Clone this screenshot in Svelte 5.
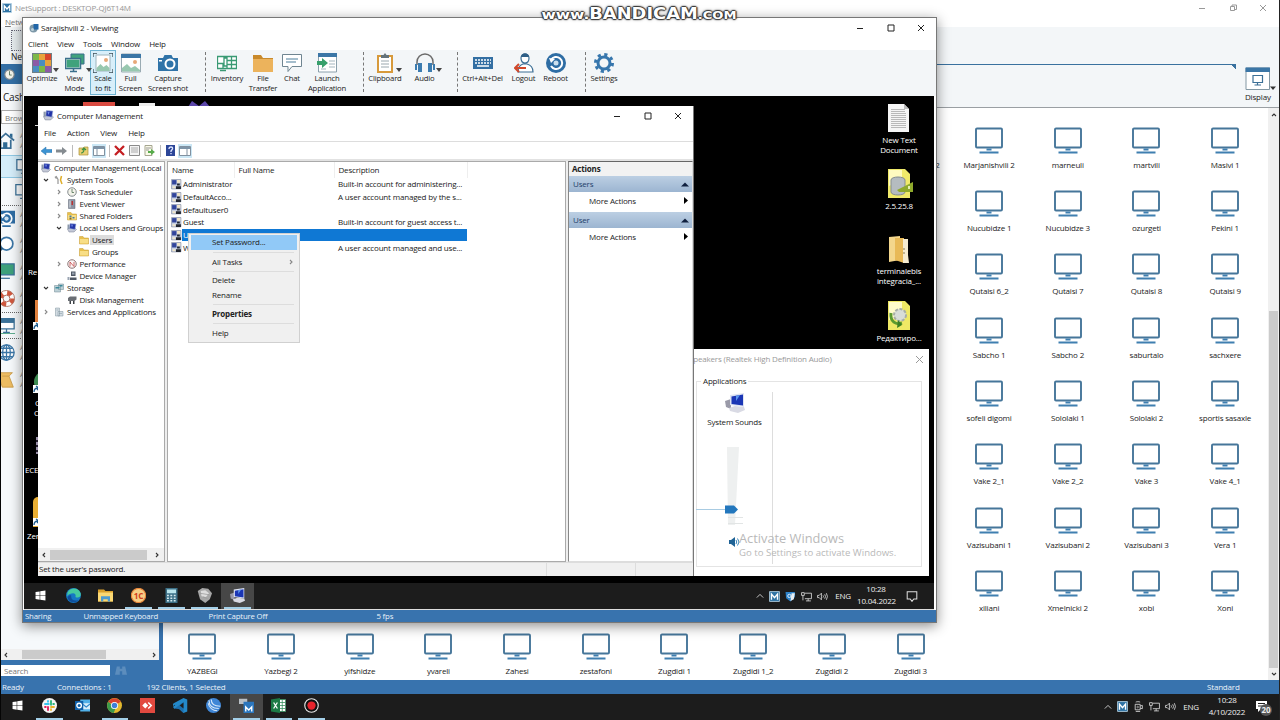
<script lang="ts">
  const clientRows = [
    ['2', 'Marjanishvili 2', 'marneuli', 'martvili', 'Masivi 1'],
    ['Nucubidze 1', 'Nucubidze 3', 'ozurgeti', 'Pekini 1'],
    ['Qutaisi 6_2', 'Qutaisi 7', 'Qutaisi 8', 'Qutaisi 9'],
    ['Sabcho 1', 'Sabcho 2', 'saburtalo', 'sachxere'],
    ['sofeli digomi', 'Sololaki 1', 'Sololaki 2', 'sportis sasaxle'],
    ['Vake 2_1', 'Vake 2_2', 'Vake 3', 'Vake 4_1'],
    ['Vazisubani 1', 'Vazisubani 2', 'Vazisubani 3', 'Vera 1'],
    ['xiliani', 'Xmelnicki 2', 'xobi', 'Xoni'],
    ['YAZBEGI', 'Yazbegi 2', 'yifshidze', 'yvareli', 'Zahesi', 'zestafoni', 'Zugdidi 1', 'Zugdidi 1_2', 'Zugdidi 2', 'Zugdidi 3'],
  ];

  const tools = [
    { icon: 'optimize', label: 'Optimize', w: 34, drop: true },
    { icon: 'viewmode', label: 'View\nMode', w: 31, drop: true },
    { icon: 'scale', label: 'Scale\nto fit', w: 26, active: true },
    { icon: 'full', label: 'Full\nScreen', w: 29 },
    { icon: 'camera', label: 'Capture\nScreen shot', w: 46 },
    { sep: true, w: 15 },
    { icon: 'inventory', label: 'Inventory', w: 42 },
    { icon: 'folder', label: 'File\nTransfer', w: 30 },
    { icon: 'chat', label: 'Chat', w: 28 },
    { icon: 'launch', label: 'Launch\nApplication', w: 42 },
    { sep: true, w: 16 },
    { icon: 'clipboard', label: 'Clipboard', w: 42, drop: true },
    { icon: 'audio', label: 'Audio', w: 37, drop: true },
    { sep: true, w: 15 },
    { icon: 'keyboard', label: 'Ctrl+Alt+Del', w: 49 },
    { icon: 'logout', label: 'Logout', w: 33 },
    { icon: 'reboot', label: 'Reboot', w: 31 },
    { sep: true, w: 15 },
    { icon: 'settings', label: 'Settings', w: 36 },
  ];

  const tree = [
    { label: 'Computer Management (Local', icon: 'mgmt', depth: 0, arrow: '' },
    { label: 'System Tools', icon: 'tools', depth: 1, arrow: 'open' },
    { label: 'Task Scheduler', icon: 'clock', depth: 2, arrow: 'closed' },
    { label: 'Event Viewer', icon: 'event', depth: 2, arrow: 'closed' },
    { label: 'Shared Folders', icon: 'shared', depth: 2, arrow: 'closed' },
    { label: 'Local Users and Groups', icon: 'mgmt', depth: 2, arrow: 'open' },
    { label: 'Users', icon: 'yfolder', depth: 3, arrow: '', selected: true },
    { label: 'Groups', icon: 'yfolder', depth: 3, arrow: '' },
    { label: 'Performance', icon: 'perf', depth: 2, arrow: 'closed' },
    { label: 'Device Manager', icon: 'device', depth: 2, arrow: '' },
    { label: 'Storage', icon: 'storage', depth: 1, arrow: 'open' },
    { label: 'Disk Management', icon: 'disk', depth: 2, arrow: '' },
    { label: 'Services and Applications', icon: 'services', depth: 1, arrow: 'closed' },
  ];

  const users = [
    { name: 'Administrator', desc: 'Built-in account for administering...' },
    { name: 'DefaultAcco...', desc: 'A user account managed by the s...' },
    { name: 'defaultuser0', desc: '' },
    { name: 'Guest', desc: 'Built-in account for guest access t...' },
    { name: 'U', desc: '', selected: true },
    { name: 'W', desc: 'A user account managed and use...' },
  ];

  const sideIcons = [
    { icon: 'house', h: 30 },
    { icon: 'screen', h: 23, active: true },
    { icon: 'screen', h: 28, dotted: true },
    { icon: 'sreboot', h: 25 },
    { icon: 'search', h: 27 },
    { icon: 'green', h: 27 },
    { icon: 'ring', h: 28, dotted: true },
    { icon: 'net', h: 26, dotted: true },
    { icon: 'globe', h: 26 },
    { icon: 'map', h: 28 },
  ];

  const remoteTasks = ['win', 'edge', 'explorer', 'onec', 'calc', 'shell', 'mmc'];
  const localTasks = ['win', 'slack', 'outlook', 'chrome', 'anydesk', 'vscode', 'swirl', 'netsupport', 'excel', 'record'];
</script>

{#snippet icon(name: string, size: number)}
  <svg class="icon" width={size} height={size} viewBox="0 0 20 20" fill="none">
    {#if name === 'optimize'}
      <path fill="#6f7f85" d="M0 0h20v20H0z" />
      <path fill="#8c5aa5" d="M1 7h6v6H1zM13 13h6v6h-6z" />
      <path fill="#7bb84a" d="M1 1h6v6H1zM7 13h6v6H7z" />
      <path fill="#d9452c" d="M13 1h6v6h-6z" />
      <path fill="#4a8ec0" d="M7 7h6v6H7zM1 13h6v6H1z" />
      <path fill="#e8a33c" d="M7 1h6v6H7zM13 7h6v6h-6z" />
    {:else if name === 'viewmode'}
      <path fill="#3fa27c" stroke="#3a6f8c" d="M6 1h13v10H6z" />
      <path fill="#3fa27c" stroke="#fff" d="M1 6h14v9H1z" />
      <path stroke="#3a6f8c" d="M.5 5.500h15v10H.5zM5 18.500h7M8.500 15v3" stroke-width="1.500" />
    {:else if name === 'scale'}
      <path fill="#fff" stroke="#9eb4bd" d="M3 2h14v16H3z" />
      <path fill="#98c8b0" d="M3.500 15l4-4 3 3 3-2 3 3v3h-13z" />
      <circle cx="13" cy="7" r="2" fill="#e8a878" />
      <path stroke="#3d4d56" stroke-width="1.300" d="M0 4V0h4M16 0h4v4M20 16v4h-4M4 20H0v-4" />
    {:else if name === 'full'}
      <path fill="#fff" stroke="#9aabb3" d="M.5 1h19v18H.5z" />
      <path fill="#3b76a6" d="M0 1h20v4H0z" />
      <path fill="#98c8b0" d="M1 15l5-4 4 4 4-2 5 4v1.500H1z" />
      <circle cx="14" cy="9" r="2" fill="#e8a878" />
    {:else if name === 'camera'}
      <path fill="#2f73a8" d="M0 5h5l1.500-3h7L15 5h5v13H0z" />
      <circle cx="12" cy="11" r="4.500" stroke="#fff" stroke-width="2" />
      <path fill="#fff" d="M1 7h3v1.500H1z" />
    {:else if name === 'inventory'}
      <path stroke="#3a9a74" stroke-width="1.300" fill="#fff" d="M.5 3.500h19v12H.5zM10 3.500v12M14.500 3.500v12M10 7.500h9M10 11.500h9M1 10.500h5v5M7 5h3v8H7z" />
      <path stroke="#3a9a74" stroke-width="1.500" d="M3 17.500h6" />
    {:else if name === 'folder'}
      <path fill="#c98a2c" d="M0 2h8l2 3h10v3H0z" />
      <path fill="#ecb35c" d="M0 6h20v13H0z" />
    {:else if name === 'chat'}
      <path fill="#fff" stroke="#6f8591" d="M.5 1.500h19v12H10l-4 5v-5H.5z" />
      <path stroke="#88a9bd" stroke-width="1.500" d="M4 6h12M4 9h10" />
    {:else if name === 'launch'}
      <path fill="#fff" stroke="#8aa0ac" d="M1.500 1h18v18h-18z" />
      <path fill="#3b76a6" d="M1 0h19v4H1z" />
      <path fill="#37a06c" d="M0 8h5V5l6 5-6 5v-3H0z" />
      <path stroke="#a3b5be" d="M12 8h6M12 11h6M4 16h5M12 14h6" />
    {:else if name === 'clipboard'}
      <path fill="#fff" stroke="#d79a3c" stroke-width="2" d="M3 3h14v16H3z" />
      <path fill="#64737b" d="M6 2h2.500l1.500-2 1.500 2H14v3H6z" />
      <path stroke="#9aa7ae" d="M6 8h8M6 11h8M6 14h8" />
    {:else if name === 'audio'}
      <path stroke="#6b6b6b" stroke-width="1.500" d="M2 12V9a8 8 0 0 1 16 0v3" />
      <path fill="#3c7cb0" d="M0 11h2v6H0zM3 10h4v9H3zM13 10h4v9h-4zM18 11h2v6h-2z" />
    {:else if name === 'keyboard'}
      <path fill="#336fa3" d="M0 4h20v12H0z" />
      <path stroke="#fff" stroke-width="1.500" stroke-dasharray="2 1" d="M2 7h16M2 10h16" />
      <path stroke="#fff" stroke-width="1.500" d="M4 13h12" />
    {:else if name === 'logout'}
      <path stroke="#3c6f96" stroke-width="1.200" fill="#fff" d="M7 5a4 4 0 0 1 8 0c0 3-1.500 5-4 5S7 8 7 5zM4 19c0-5 2-7 5-8h4c4 1 6 3 6 8z" />
      <path fill="#2f5f86" d="M7 4c0-5 8-5 8 0z" />
      <path stroke="#d0492c" stroke-width="2" d="M1 15h11M5 11l-4 4 4 4" />
    {:else if name === 'reboot' || name === 'sreboot'}
      {#if name === 'reboot'}<circle cx="10" cy="10" r="10" fill="#2e6da4" />{:else}<path fill="#2e6da4" d="M0 1h20v15H0zM5 18h10v2H5z" />{/if}
      <path stroke="#fff" stroke-width="2" d="M5 7a6 6 0 1 1 0 6" />
      <path fill="#fff" d="M3 5l6 1-4 4z" />
      <circle cx="10" cy="10" r="2.500" fill="#cde0ee" />
    {:else if name === 'settings'}
      <circle cx="10" cy="10" r="6" stroke="#3676ad" stroke-width="3" />
      <circle cx="10" cy="10" r="8.500" stroke="#3676ad" stroke-width="3" stroke-dasharray="3.200 3.475" />
    {:else if name === 'screen' || name === 'net'}
      <path stroke="#3b7299" stroke-width="1.500" fill="#fdfeff" d="M1 2h18v12H1zM6 18h8M10 14v4" />
      {#if name === 'net'}<path fill="#3b7299" d="M1 2h18v5H1z" /><path stroke="#3a9a74" d="M0 19.500h20" />{/if}
    {:else if name === 'green'}
      <path fill="#3da07a" stroke="#3b7299" stroke-width="1.500" d="M-4 1h23v13H-4z" /><path stroke="#3b7299" stroke-width="1.500" d="M2 18h12" />
    {:else if name === 'house'}
      <path fill="#f7fafb" stroke="#3b6f96" stroke-width="2" d="M0 10L9 2l10 8M3 9v10h12V9" /><path fill="#2f6a94" d="M6 12h5v7H6zM14 2h3v5l-3-2z" />
    {:else if name === 'search'}
      <circle cx="10" cy="9" r="7.500" stroke="#3b76a6" stroke-width="2" fill="#fff" /><path stroke="#2b5a80" stroke-width="3" d="M5 14l-5 5" />
    {:else if name === 'ring'}
      <circle cx="10" cy="10" r="7" stroke="#fff" stroke-width="5" /><circle cx="10" cy="10" r="7" stroke="#d0583e" stroke-width="5" stroke-dasharray="5.500 5.500" /><circle cx="10" cy="10" r="4" stroke="#a8503e" /><circle cx="10" cy="10" r="9.500" stroke="#b0705e" />
    {:else if name === 'globe'}
      <circle cx="10" cy="10" r="9" stroke="#3b76a6" stroke-width="1.500" fill="#fff" /><path stroke="#3b76a6" stroke-width="1.500" d="M10 1v18M1 10h18M3 5h14M3 15h14" /><ellipse cx="10" cy="10" rx="4.500" ry="9" stroke="#3b76a6" stroke-width="1.500" />
    {:else if name === 'map'}
      <path fill="#ecbc62" stroke="#c99a45" d="M0 2h17l-4 4 5 13H5L2 9H0zM5 6h8" />
    {:else if name === 'mgmt'}
      <path fill="#c3c8d6" stroke="#777f92" d="M1 12l5-3h9l4 4-5 5H4z" />
      <path fill="#2334a6" stroke="#a9b7db" d="M6 1l12 1-2 11-11-2z" />
      <path fill="#6f89e6" d="M8 3l4 .5L10 9z" />
      <path fill="#8b98aa" d="M1 3h4v9H1z" />
    {:else if name === 'mmc'}
      <path fill="#9a9aa8" d="M0 8l6-2v10l-5-2z" />
      <path fill="#d9dae4" d="M4 15l6-2 9 1 1 3-7 3-8-2z" />
      <path fill="#dfe4f2" d="M5 2l14-2v14L5 12z" />
      <path fill="#1b36b5" d="M6.500 3.500L18 1.500v11L6.500 11z" />
      <path fill="#5d96ee" d="M11 2.700l4-.7-4 6z" />
    {:else if name === 'tools'}
      <path stroke="#9a9a9a" stroke-width="2.500" d="M4 2l4 7v9M2 3l3 4" /><path stroke="#dfae2a" stroke-width="3" d="M15 2l-2 8 3 8" />
    {:else if name === 'clock'}
      <circle cx="10" cy="10" r="8.500" fill="#f3f3ea" stroke="#858b8e" stroke-width="2" /><path stroke="#4a6b4c" stroke-width="1.500" d="M10 4v7h4" />
    {:else if name === 'event'}
      <path fill="#8c94a3" stroke="#5a6270" d="M3 1h13v18H3z" /><path fill="#b33" d="M9 4h3v8H9z" /><path fill="#dce2e8" d="M5 3h2v14H5z" />
    {:else if name === 'shared' || name === 'yfolder'}
      <path fill="#e8c04c" stroke="#c69b31" d="M1 3h7l2 3h9v12H1z" /><path fill="#f8de86" d="M2 8h16v9H2z" />
      {#if name === 'shared'}<path fill="#4c7f9e" d="M5 9h4v3H5zM11 12h4v3h-4z" /><path fill="#7f6a25" d="M5 13h4v4H5z" />{/if}
    {:else if name === 'perf'}
      <circle cx="10" cy="10" r="8.500" fill="#fbf5f5" stroke="#8c7575" stroke-width="2" /><path stroke="#c03c3c" stroke-width="1.500" d="M6 15V6l8 9V6" />
    {:else if name === 'device'}
      <path fill="#525a66" d="M8 1h9v9H8zM6 13h13v5H6z" /><path fill="#9aa4b2" d="M10 3h5v4h-5zM1 12h4v6H1z" />
    {:else if name === 'storage'}
      <path fill="#bcd0d6" stroke="#6c8790" d="M1 5h12v13H1zM9 2h10v11H9z" /><path fill="#3c8a9c" d="M3 8h8v3H3zM11 4h6v3h-6z" />
    {:else if name === 'disk'}
      <path fill="#6a6e74" d="M2 6l4-3h13v6l-4 3H2z" /><path fill="#3c4045" d="M5 12h3v6H5zM12 12h3v6h-3z" />
    {:else if name === 'services'}
      <path fill="#d4dde3" stroke="#7e929d" d="M3 2h8v16H3zM8 9h10v9H8z" /><path stroke="#7e929d" d="M5 6h4M10 13h6" />
    {:else if name === 'user'}
      <path fill="#c9d2e4" stroke="#687390" d="M1 1h17v17H1z" />
      <path fill="#31459b" d="M2 2h8v8H2z" /><path fill="#21262f" d="M11 8h5v4h-5zM9 13h9v5H9z" /><path fill="#f1e6c8" d="M11 2h6v5h-6zM3 13h5v4H3z" />
    {:else if name === 'win'}
      <path fill="#fff" d="M1 3.500l7.500-1v7H1zM9.500 2.300L19 1v8.500H9.500zM1 10.500h7.500v7L1 16.500zM9.500 10.500H19V19l-9.500-1.300z" />
    {:else if name === 'edge'}
      <circle cx="10" cy="10" r="10" fill="#1677c4" /><path fill="#45c9a0" d="M2 6C5-1 17-2 19.500 7c1 5-3 7-7 5 1-2 0-5-3-5-3 0-6 1-8 4z" /><path fill="#0f4f9c" d="M7 10c-1 6 4 8 10 6-4 5-13 4-15-3 1-3 3-4 5-3z" />
    {:else if name === 'explorer'}
      <path fill="#d9a02c" d="M0 2h8l2 2h10v14H0z" /><path fill="#fbd873" d="M0 6h20v12H0z" /><path fill="#4e9bd0" d="M4 11h12v7h-3v-3H7v3H4z" />
    {:else if name === 'onec'}
      <circle cx="10" cy="10" r="9.500" fill="#f7cf86" stroke="#e8863a" stroke-width="1.500" />
      <text x="10" y="14" text-anchor="middle" font-size="11" font-weight="bold" fill="#d2401c">1C</text>
    {:else if name === 'calc'}
      <path fill="#3b6f86" d="M2 0h16v20H2z" /><path fill="#b9e4ec" d="M4 2h12v5H4z" /><path stroke="#d5e9ee" stroke-width="2" stroke-dasharray="2.500 2" d="M4 10h13M4 13.500h13M4 17h13" />
    {:else if name === 'shell'}
      <path fill="#a7a7a7" d="M1 4l6-4 8 1 5 6-3 8-6 5-7-5z" /><path fill="#dedede" d="M5 4l6-1 5 4-4 5-6-1z" /><path stroke="#999" d="M4 7l12 2M8 12l6 2" />
    {:else if name === 'slack'}
      <circle cx="10" cy="10" r="10" fill="#f5f5f5" /><path stroke="#36c5f0" stroke-width="2.500" stroke-linecap="round" d="M4 8h5M8 4v1" /><path stroke="#2eb67d" stroke-width="2.500" stroke-linecap="round" d="M12 4v5M15 8h1" /><path stroke="#e01e5a" stroke-width="2.500" stroke-linecap="round" d="M8 12v4M4 12h1" /><path stroke="#ecb22e" stroke-width="2.500" stroke-linecap="round" d="M12 12h4M12 15v1" />
    {:else if name === 'outlook'}
      <path fill="#50b0e8" d="M7 2h13v16H7z" /><path fill="#d8eefa" d="M9 7h11v8H9z" /><path stroke="#2f87c9" stroke-width="1.500" d="M10 8l5 4 5-4" /><path fill="#0f5fa8" d="M0 4h11v12H0z" /><circle cx="5.500" cy="10" r="3" stroke="#fff" stroke-width="1.800" />
    {:else if name === 'chrome'}
      <circle cx="10" cy="10" r="10" fill="#e3b92e" /><path fill="#d8422f" d="M1.500 5A10 10 0 0 1 18.500 5L10 10z" /><path fill="#3c9a4c" d="M1.500 5A10 10 0 0 0 9 20l3-8-4-2z" /><circle cx="10" cy="10" r="4.800" fill="#fff" /><circle cx="10" cy="10" r="3.700" fill="#3f7fd8" />
    {:else if name === 'anydesk'}
      <path fill="#e2493f" d="M0 0h20v20H0z" /><path fill="#fff" d="M3 10l4-4 4 4-4 4z" /><path stroke="#fff" stroke-width="2" d="M11 6l4 4-4 4" />
    {:else if name === 'vscode'}
      <path fill="#2489ca" d="M14 0l5 2v16l-5 2L2 9l-2 2V8l1-1z" /><path fill="#1c6fae" d="M14 0v20L9 15l-7-1-2-1 14-8z" /><path stroke="#2489ca" stroke-width="3" d="M1 13L14 3" /><path fill="#1e1e1e" d="M14 6v8l-5-4z" />
    {:else if name === 'swirl'}
      <circle cx="10" cy="10" r="10" fill="#3f86d6" /><path stroke="#d5e7fa" stroke-width="1.500" d="M4 3c0 7 5 11 13 11M7 2c0 6 4 9 12 9M3 7c1 6 6 10 12 10" />
    {:else if name === 'netsupport'}
      <path fill="#b9bfc4" d="M0 1h11v7H0z" /><path fill="#2b76bd" d="M6 5h14v15H6z" /><path stroke="#fff" stroke-width="1.800" d="M9 18v-6l4 4 4-4v6" />
    {:else if name === 'excel'}
      <path fill="#fff" stroke="#2f8b58" d="M10 2h9.500v16H10z" /><path stroke="#2f8b58" d="M10 6h9M10 10h9M10 14h9M15 2v16" /><path fill="#1c7a45" d="M0 2l12-2v20L0 18z" /><path stroke="#fff" stroke-width="1.700" d="M3.500 6l5 8M8.500 6l-5 8" />
    {:else if name === 'record'}
      <circle cx="10" cy="10" r="9" fill="#111" stroke="#e8e8e8" stroke-width="1.500" /><circle cx="10" cy="10" r="5.500" fill="#e8242c" />
    {:else if name === 'm'}
      <path fill="#2f73a4" stroke="#b7d4e6" stroke-width="1.500" d="M1 1h18v18H1z" /><path stroke="#fff" stroke-width="2.500" d="M4.500 16V5.500L10 12l5.500-6.500V16" />
    {:else if name === 'dual'}
      <circle cx="9" cy="11" r="8" fill="#7d98a8" /><path fill="#2166a8" d="M9 2h10v11H9z" /><circle cx="7" cy="13" r="3" fill="#bcd0da" />
    {:else if name === 'shield'}
      <path fill="#2d82c9" d="M1 2h17v9l-8 8-8-6z" /><path fill="#e9eef1" d="M12 4h6l-2 11-6 3z" /><circle cx="8" cy="9" r="3" stroke="#fff" stroke-width="1.500" />
    {:else if name === 'up'}
      <path stroke="#eee" stroke-width="2" d="M2 14l8-8 8 8" />
    {:else if name === 'meet'}
      <path stroke="#ddd" stroke-width="1.500" d="M4 6h9v10H4zM13 9l4-1v6l-4-1M5 2c2-1 6-1 8 0M5 19h8" /><circle cx="8.500" cy="11" r="1.500" stroke="#ddd" />
    {:else if name === 'lan'}
      <path stroke="#ddd" stroke-width="1.500" d="M7 4h12v10H7M13 14v4M9 18h9M1 3h5v5H1zM3.500 8v9" />
    {:else if name === 'sound'}
      <path stroke="#ddd" stroke-width="1.500" d="M1 8h3l4-4v12l-4-4H1zM11 8q1.500 2 0 4M14 6q3 4 0 8M17 4q4 6 0 12" />
    {:else if name === 'note'}
      <path stroke="#ddd" stroke-width="1.700" d="M2 3h16v12h-5l-3 4-3-4H2z" />
    {:else if name === 'binoc'}
      <path fill="#5c8dbd" d="M3 4h5v4h4V4h5l3 14h-8v-6H8v6H0z" />
    {/if}
  </svg>
{/snippet}

{#snippet controls(restore: boolean)}
  <div class="controls">
    <svg width="10" height="10" viewBox="0 0 10 10"><path d="M2 5.500h6" /></svg>
    <svg width="10" height="10" viewBox="0 0 10 10">
      {#if restore}<path d="M2.500 3.500h4v4h-4zM4 3.500V2h4.500v4.500H7" />{:else}<path d="M2 2h6v6H2z" />{/if}
    </svg>
    <svg width="10" height="10" viewBox="0 0 10 10"><path d="M2 2l6 6M8 2L2 8" /></svg>
  </div>
{/snippet}

{#snippet chevron(dir: string)}
  <svg class="chev {dir}" width="6" height="6" viewBox="0 0 6 6"><path d="M2 1l2 2-2 2" /></svg>
{/snippet}

<div class="screen">
  <header class="main-title">
    <div class="title-left">
      {@render icon('m', 10)}
      <span>NetSupport : DESKTOP-QJ6T14M</span>
    </div>
    {@render controls(true)}
  </header>
  <div class="main-menu"><u>N</u>etwork</div>

  <div class="main-toolbar">
    <div class="new-tool">
      <span class="notepad"></span>
      <span>New</span>
    </div>
    <div class="ribbon-line"></div>
    <div class="display-tool">
      <svg width="31" height="24" viewBox="0 0 31 24" fill="none">
        <path fill="#fff" stroke="#8297a3" d="M1 1h23.500v21.500H1z" />
        <path fill="#3b76a6" d="M.5.500h24.500V5H.5z" />
        <path stroke="#3b6f96" stroke-width="1.200" d="M8 8.500h9.500v7H8zM12.500 15v3M9.500 18h6.500" />
        <path fill="#333" d="M25 19.500h6l-3 3.500z" />
      </svg>
      <span>Display</span>
    </div>
  </div>

  <main class="main-body">
    <aside class="side">
      <div class="side-head">{@render icon('clock', 11)}</div>
      <div class="side-cash">Cash</div>
      <div class="browse">Browse</div>
      <div class="side-list">
        {#each sideIcons as s}
          <div class="side-row" class:active={s.active} class:dotted={s.dotted} style="height: {s.h}px">
            {@render icon(s.icon, 17)}
            <span>A<br />A</span>
          </div>
        {/each}
      </div>
      <div class="hscroll side-scroll">{@render chevron('left')}<i></i>{@render chevron('right')}</div>
      <div class="search-row">
        <div class="search-box">Search</div>
        {@render icon('binoc', 12)}
      </div>
    </aside>

    <section class="clients">
      <div class="client-grid">
        {#each clientRows as row, r}
          <div class="client-row" class:first={r === 8}>
            {#each row as name, c}
              <div class="client" class:tail={r === 0 && c === 0}>
                <svg width="30" height="28" viewBox="0 0 30 28" fill="none">
                  <rect x="2" y="1.500" width="26" height="19" rx="1" fill="#fff" stroke="#46769a" stroke-width="1.900" />
                  <path stroke="#3f7fb0" stroke-width="2" d="M12.500 22.500h5M5.500 25.500h19" />
                </svg>
                <span>{name}</span>
              </div>
            {/each}
          </div>
        {/each}
      </div>
      <div class="vscroll">{@render chevron('upw')}<i></i>{@render chevron('down')}</div>
    </section>
  </main>

  <footer class="main-status">
    <span class="s1">Ready</span><span class="s2">Connections : 1</span><span class="s3">192 Clients, 1 Selected</span><span class="s4">Standard</span>
  </footer>

  <nav class="taskbar local">
    {#each localTasks as t}
      <div class="task" class:running={['slack', 'chrome', 'netsupport', 'excel', 'record'].includes(t)} class:current={t === 'netsupport'}>{@render icon(t, t === 'win' ? 11 : 15)}</div>
    {/each}
    <div class="tray">
      {#each ['up', 'm', 'meet', 'lan', 'sound'] as t}{@render icon(t, t === 'up' ? 8 : 11)}{/each}
      <span class="lang">ENG</span>
      <span class="time">10:28<br />4/10/2022</span>
      <div class="notify">
        <svg width="13" height="11" viewBox="0 0 13 11"><path fill="#fff" d="M0 0h11v8H5l-3 3V8H0z" /><path stroke="#222" d="M2 2.500h7M2 5h7" /></svg>
        <b>20</b>
      </div>
    </div>
  </nav>

  <!-- remote session viewer -->
  <div class="viewer">
    <div class="viewer-title">
      <div class="title-left">{@render icon('dual', 10)}<span>Sarajishvili 2 - Viewing</span></div>
      {@render controls(false)}
    </div>
    <div class="viewer-menu"><span>Client</span><span>View</span><span>Tools</span><span>Window</span><span>Help</span></div>
    <div class="viewer-tools">
      {#each tools as t}
        {#if t.sep}
          <div class="tool-sep" style="width: {t.w}px"><i></i></div>
        {:else}
          <div class="tool" class:active={t.active} style="width: {t.w}px">
            <div class="tool-icon">
              {@render icon(t.icon ?? '', 20)}
              {#if t.drop}<i class="drop"></i>{/if}
            </div>
            <span>{t.label}</span>
          </div>
        {/if}
      {/each}
    </div>

    <div class="desktop">
      <i class="bit" style="left: 59px; top: 6px; width: 32px; height: 8px; background: #d94a40"></i>
      <i class="bit" style="left: 115px; top: 7px; width: 16px; height: 8px; background: #eee"></i>
      <svg class="bit" style="left: 164px; top: 5px" width="22" height="6" viewBox="0 0 22 6"><path fill="#5a45a8" d="M0 6L4 0l7 5 6-5 5 6z" /></svg>
      <i class="bit" style="left: 11px; top: 29px; width: 6px; height: 1px; background: #ddd"></i>
      <i class="bit" style="left: 11px; top: 204px; width: 9px; height: 30px; background: #e0803c"></i>
      <i class="bit round" style="left: 10px; top: 275px; width: 22px; height: 22px; background: #3d8b52"></i>
      <i class="bit" style="left: 9px; top: 401px; width: 12px; height: 30px; background: #e8ae34; border-radius: 5px 0 0 0"></i>
      <i class="bit" style="left: 12px; top: 341px; width: 6px; height: 17px; background: repeating-linear-gradient(#998fa8 0 3px, #221d2b 3px 5px)"></i>
      {#each [230, 293, 426] as y}
        <svg class="bit" style="left: 9px; top: {y - 4}px" width="7" height="8" viewBox="0 0 7 8"><path fill="#fff" d="M0 0h7v8H0z" /><path fill="none" stroke="#1c5b8c" stroke-width="1.300" d="M1 7q0-4 4-4M3 1l3 2-2 2" /></svg>
      {/each}
      <span class="bit txt" style="left: 4px; top: 171px">Re</span>
      <span class="bit txt" style="left: 11px; top: 302px">G</span>
      <span class="bit txt" style="left: 10px; top: 312px">C</span>
      <span class="bit txt" style="left: 1px; top: 369px">ECE</span>
      <span class="bit txt" style="left: 3px; top: 435px">Zen</span>

      <div class="shortcut" style="top: 7px">
        <svg width="24" height="30" viewBox="0 0 24 30"><path fill="#f5f5f5" d="M1 1h16l5 5v23H1z" /><path fill="#bbb" d="M17 1v5h5z" /><path stroke="#aaa" d="M4 6.500h14M4 8.500h14M4 10.500h15M4 12.500h15M4 14.500h15M4 16.500h15M4 18.500h15M4 20.500h15M4 22.500h15M4 24.500h15" stroke-width=".8" /></svg>
        <span>New Text<br />Document</span>
      </div>
      <div class="shortcut" style="top: 72px">
        <svg width="28" height="31" viewBox="0 0 28 31"><path fill="#f0ea6a" d="M3 1h17l5 5v24H3z" /><path fill="#fffbc0" d="M4 2h13v10L4 18z" /><path fill="#b5bcc0" stroke="#858d90" d="M6 12c0-4 14-4 14 0v12c0 4-14 4-14 0z" /><path fill="#8faa2c" d="M12 22l16-8v10H14z" /><path fill="#e6efb0" d="M23 18h2v3h-2z" /></svg>
        <span>2.5.25.8</span>
      </div>
      <div class="shortcut" style="top: 139px">
        <svg width="24" height="29" viewBox="0 0 24 29"><path fill="#f3d68c" d="M2 2l11-1v24l-11 2z" /><path fill="#e8b957" d="M8 3h9v25l-9-3z" /><path fill="#f6ecd0" d="M16 4h5v16l1 8h-6z" /><path stroke="#8a7a50" d="M16 14h2M16 18h2" /></svg>
        <span>terminalebis<br />integracia_...</span>
      </div>
      <div class="shortcut" style="top: 204px">
        <svg width="24" height="31" viewBox="0 0 24 31"><path fill="#efe965" d="M1 1h17l5 5v24H1z" /><path fill="#fffccb" d="M2 2h13v14L2 20z" /><circle cx="13" cy="15" r="6" fill="#d8ddd8" stroke="#a8aea6" stroke-width="2" stroke-dasharray="3 1.500" /><path fill="none" stroke="#5c9a2f" stroke-width="3" d="M4 13c-1 9 5 12 11 10" /><path fill="#3c7f22" d="M11 20l-1 8 5-3z" /></svg>
        <span>Редактиро...</span>
      </div>

      <!-- volume mixer -->
      <div class="mixer">
        <div class="mixer-title">
          <span>Speakers (Realtek High Definition Audio)</span>
          <svg width="9" height="9" viewBox="0 0 9 9"><path stroke="#999" d="M1 1l7 7M8 1L1 8" /></svg>
        </div>
        <fieldset>
          <legend>Applications</legend>
          <div class="channel">
            {@render icon('mmc', 20)}
            <span>System Sounds</span>
            <svg class="slider" width="77" height="80" viewBox="0 0 77 80">
              <path fill="#eef0f0" d="M34 0h12l-4 78h-7z" />
              <path stroke="#a8cbe2" d="M3 62.500h29" />
              <path fill="#2377bd" d="M32 58.500h9l4 4-4 4h-9z" />
              <path stroke="#e2e5e5" d="M35 70.500h15M35 76.500h15" />
            </svg>
            <svg class="speaker" width="11" height="10" viewBox="0 0 11 10"><path fill="#1f6396" d="M0 3h2l4-3v10L2 7H0z" /><path fill="none" stroke="#3785bb" d="M7 3q1.500 2 0 4M8.500 1.500q3 3.500 0 7" /></svg>
          </div>
        </fieldset>
      </div>
      <div class="activate">
        <p>Activate Windows</p>
        <small>Go to Settings to activate Windows.</small>
      </div>

      <!-- computer management console -->
      <div class="console">
        <div class="console-title">
          <div class="title-left">{@render icon('mgmt', 11)}<span>Computer Management</span></div>
          {@render controls(false)}
        </div>
        <div class="console-menu"><span>File</span><span>Action</span><span>View</span><span>Help</span></div>
        <div class="console-tools">
          <svg width="11" height="10" viewBox="0 0 11 10"><path fill="#3c93d2" stroke="#2974ae" stroke-width=".5" d="M0 5l5-4v2.500h6v3H5V9z" /></svg>
          <svg width="11" height="10" viewBox="0 0 11 10"><path fill="#858b90" d="M11 5L6 1v2.500H0v3h6V9z" /></svg>
          <i></i>
          <svg width="11" height="11" viewBox="0 0 11 11"><path fill="#e9cf72" stroke="#ab8f3a" stroke-width=".7" d="M1 3h4l1-1h4v8H1z" /><path fill="none" stroke="#3d9143" stroke-width="1.200" d="M3 8q3 0 3-4M4 5l2-2 2 2" /></svg>
          <span class="pressed"><svg width="12" height="10" viewBox="0 0 12 10"><path fill="#fff" stroke="#8191a0" d="M.5.500h11v9H.5zM4 3v6" /><path fill="#7d94a8" d="M1 1h10v2H1z" /></svg></span>
          <i></i>
          <svg class="delete" width="11" height="11" viewBox="0 0 11 11"><path fill="none" stroke="#c41e22" stroke-width="2.300" d="M1 1l9 9M10 1L1 10" /></svg>
          <svg width="11" height="11" viewBox="0 0 11 11"><path fill="#f4f4f4" stroke="#8a8a8a" d="M.5.500h10v10H.5z" /><path stroke="#aaa" d="M2 3h4M2 5h7M2 7h7M6 3h3" /></svg>
          <svg width="11" height="11" viewBox="0 0 11 11"><path fill="#fafae8" stroke="#a5a58f" d="M1 .5h7v10H1z" /><path stroke="#999" d="M2 3h5M2 5h3" /><path fill="#57ac4b" d="M4 6h3V4l4 3-4 3V8H4z" /></svg>
          <i></i>
          <svg width="9" height="11" viewBox="0 0 9 11"><path fill="#2c4698" d="M0 0h9v11H0z" /><path fill="none" stroke="#dfe6ff" stroke-width="1.300" d="M3 4q0-2 2-2t1.500 2L5 6v1M5 8v1.300" /></svg>
          <span class="pressed"><svg width="12" height="10" viewBox="0 0 12 10"><path fill="#fff" stroke="#8191a0" d="M.5.500h11v9H.5zM8 3v6" /><path fill="#7d94a8" d="M1 1h10v2H1z" /></svg></span>
        </div>
        <div class="console-body">
          <div class="tree">
            {#each tree as n}
              <div class="node" style="padding-left: {n.depth ? 5 + (n.depth - 1) * 12.5 : 0}px">
                {#if n.depth}<em>{#if n.arrow}{@render chevron(n.arrow)}{/if}</em>{/if}
                {@render icon(n.icon, 10)}
                <span class:selected={n.selected}>{n.label}</span>
              </div>
            {/each}
            <div class="hscroll tree-scroll">{@render chevron('left')}<i></i>{@render chevron('right')}</div>
          </div>
          <div class="list">
            <div class="list-head"><span>Name</span><span>Full Name</span><span>Description</span></div>
            {#each users as u}
              <div class="user" class:selected={u.selected}>
                {@render icon('user', 11)}
                <span class="uname">{u.name}</span>
                <span class="udesc">{u.desc}</span>
              </div>
            {/each}
          </div>
          <div class="actions">
            <b>Actions</b>
            {#each ['Users', 'User'] as section}
              <div class="act-head"><span>{section}</span><svg width="8" height="5" viewBox="0 0 8 5"><path fill="#10203f" d="M0 4.500L4 .5l4 4z" /></svg></div>
              <div class="act-item"><span>More Actions</span><svg width="4" height="7" viewBox="0 0 4 7"><path d="M0 0l4 3.500L0 7z" /></svg></div>
            {/each}
          </div>
        </div>
        <div class="console-status"><span>Set the user's password.</span><i></i><i></i></div>
      </div>

      <div class="context">
        <div class="hot">Set Password...</div>
        <hr />
        <div class="sub">All Tasks {@render chevron('closed')}</div>
        <hr />
        <div class="tight">Delete</div>
        <div class="tight">Rename</div>
        <hr />
        <div><b>Properties</b></div>
        <hr />
        <div>Help</div>
      </div>

      <nav class="taskbar remote">
        {#each remoteTasks as t, i}
          <div class="task" class:running={i > 2} class:current={t === 'mmc'}>{@render icon(t, t === 'win' ? 11 : 15)}</div>
        {/each}
        <div class="tray">
          {#each ['up', 'm', 'shield', 'lan', 'sound'] as t}{@render icon(t, t === 'up' ? 8 : 11)}{/each}
          <span class="lang">ENG</span>
          <span class="time">10:28<br />10.04.2022</span>
          {@render icon('note', 12)}
        </div>
      </nav>
    </div>

    <div class="viewer-status"><span>Sharing</span><span>Unmapped Keyboard</span><span>Print Capture Off</span><span>5 fps</span></div>
  </div>

  <div class="watermark"><small>www.</small>BANDICAM<small class="tld">.COM</small></div>
</div>

<style>
  :global(body) {
    margin: 0;
    overflow: hidden;
  }

  .screen {
    position: relative;
    box-sizing: border-box;
    width: 1280px;
    height: 720px;
    display: flex;
    flex-direction: column;
    overflow: hidden;
    border-left: 1px solid #050505;
    border-right: 1px solid #222;
    background: #fff;
    color: #222;
    font-family: "Open Sans", "Noto Sans", sans-serif;
    font-size: 8px;
    letter-spacing: -0.18px;
    line-height: 10px;
    white-space: nowrap;
  }

  .icon,
  svg {
    display: block;
    flex: none;
  }

  .title-left {
    display: flex;
    align-items: center;
    gap: 3px;
  }

  .controls {
    display: flex;
    gap: 20.500px;
  }

  .controls path {
    fill: none;
    stroke: #222;
  }

  .chev path {
    fill: none;
    stroke: #333;
    stroke-width: 1.100;
  }

  .left { transform: rotate(180deg); }
  .open, .down { transform: rotate(90deg); }
  .upw { transform: rotate(-90deg); }
  .closed path { stroke: #888; }

  /* main window */
  .main-title {
    height: 15px;
    flex: none;
    display: flex;
    align-items: center;
    justify-content: space-between;
    padding: 0 11px 0 1px;
    color: #999;
  }

  .main-title .controls path { stroke: #999; }

  .main-menu {
    height: 12px;
    flex: none;
    padding-left: 4px;
    line-height: 13px;
    color: #777;
  }

  .main-toolbar {
    height: 81px;
    flex: none;
    box-sizing: border-box;
    border-bottom: 1px solid #9a9fa3;
    background: #f3f6f8;
    display: flex;
    align-items: flex-start;
  }

  .new-tool {
    width: 40px;
    padding: 3px 0 0 10px;
    display: flex;
    flex-direction: column;
    font-size: 8.500px;
  }

  .notepad {
    width: 24px;
    height: 19px;
    border: 1px dotted #667;
    background: #e7edef;
    margin-bottom: 1px;
  }

  .ribbon-line {
    width: 1185px;
    height: 4px;
    margin-top: 37px;
    border-top: 1px solid #39719f;
    background: linear-gradient(225deg, #39719f 3px, transparent 3px);
  }

  .display-tool {
    margin: 40px 0 0 9px;
    width: 31px;
  }

  .display-tool span {
    display: block;
    line-height: 12px;
  }

  .main-body {
    flex: 1;
    min-height: 0;
    display: flex;
  }

  .side {
    width: 162px;
    flex: none;
    background: #3873ae;
    display: flex;
    flex-direction: column;
    margin-top: -44px;
  }

  .side-head {
    height: 20px;
    width: 158px;
    flex: none;
    box-sizing: border-box;
    background: #336fa5;
    padding: 5px 3px;
  }

  .side-cash,
  .browse,
  .side-list {
    width: 158px;
    box-sizing: border-box;
    background: #f6f9fb;
  }

  .side-cash {
    height: 26px;
    flex: none;
    padding-left: 2px;
    line-height: 27px;
    font-size: 10px;
  }

  .browse {
    height: 14px;
    flex: none;
    border: 1px solid #aaa;
    padding-left: 3px;
    line-height: 13px;
    color: #777;
    background: #fff;
  }

  .side-list {
    flex: 1;
    padding-top: 1px;
  }

  .side-row {
    box-sizing: border-box;
    display: flex;
    align-items: center;
    gap: 5px;
    margin-left: -3px;
    color: #888;
  }

  .side-row.active {
    background: #d5edf9;
    border: 1px solid #8fc8e4;
  }

  .side-row.active .icon,
  .side-row.active + .side-row .icon {
    margin-left: 17px;
  }

  .side-row.dotted { border-bottom: 1px dotted #666; }

  .hscroll {
    display: flex;
    align-items: center;
    background: #f0f0f0;
  }

  .hscroll i { background: #cbcbcb; }

  .side-scroll {
    height: 11px;
    width: 158px;
    flex: none;
    box-sizing: border-box;
    padding: 0 2px;
    justify-content: space-between;
  }

  .side-scroll i {
    width: 84px;
    height: 9px;
    margin-right: 32px;
  }

  .search-row {
    height: 20px;
    flex: none;
    display: flex;
    align-items: center;
    gap: 5px;
  }

  .search-box {
    width: 106px;
    height: 11px;
    padding-left: 3px;
    background: #fff;
    line-height: 11px;
    color: #777;
  }

  .clients {
    flex: 1;
    display: flex;
    justify-content: space-between;
    background: #fff;
  }

  .client-grid {
    width: 1101.500px;
    padding-top: 18.600px;
  }

  .client-row {
    height: 63.350px;
    display: flex;
    justify-content: flex-end;
  }

  .client-row.first {
    justify-content: flex-start;
    height: 52px;
  }

  .client {
    width: 78.700px;
    display: flex;
    flex-direction: column;
    align-items: center;
  }

  .client span { margin-top: 5px; }
  .client.tail span { padding-left: 54px; }

  .vscroll {
    width: 11px;
    background: #f0f0f0;
    display: flex;
    flex-direction: column;
    align-items: center;
    justify-content: space-between;
    padding: 4px 0 3px;
  }

  .vscroll i {
    width: 9px;
    height: 357px;
    margin-top: 190px;
    background: #cbcbcb;
  }

  .main-status,
  .viewer-status {
    flex: none;
    display: flex;
    align-items: center;
    background: #3873ae;
    color: #eaf2f9;
  }

  .main-status { height: 13.500px; padding-left: 1px; }
  .s1 { width: 55px; }
  .s2 { width: 89.500px; }
  .s3 { flex: 1; }
  .s4 { width: 72px; }

  .taskbar {
    display: flex;
    background: #1c1c1c;
    color: #eee;
  }

  .local { height: 26.500px; flex: none; }

  .task {
    width: 32.800px;
    box-sizing: border-box;
    display: flex;
    align-items: center;
    justify-content: center;
    border-bottom: 2px solid transparent;
  }

  .local .task:first-child { width: 32px; }
  .task.running { border-image: linear-gradient(90deg, transparent 3px, #a3cfe8 3px calc(100% - 3px), transparent calc(100% - 3px)) 0 0 2 0; }
  .task.current { background: #474747; }

  .tray {
    flex: 1;
    display: flex;
    justify-content: flex-end;
    align-items: center;
    gap: 5px;
    line-height: 12px;
  }

  .local .tray { padding-right: 2px; }
  .lang { margin: 0 1px 0 2px; }
  .time { text-align: center; width: 38px; margin-top: -2px; }

  .notify {
    position: relative;
    width: 21px;
    padding-left: 9px;
  }

  .local .time { margin-right: -4px; }

  .notify b {
    position: absolute;
    left: 13px;
    top: 3px;
    width: 12px;
    height: 12px;
    border-radius: 6px;
    background: #555;
    text-align: center;
    line-height: 11px;
  }

  .local .lang { margin: 0 4px 0 2px; }

  /* viewer window */
  .viewer {
    position: absolute;
    left: 21px;
    top: 17px;
    width: 915px;
    height: 606px;
    box-sizing: border-box;
    border: 1px solid #777;
    display: flex;
    flex-direction: column;
    background: #fff;
    box-shadow: 0 3px 12px rgba(0, 0, 0, 0.45);
  }

  .viewer-title {
    height: 20px;
    flex: none;
    display: flex;
    align-items: center;
    justify-content: space-between;
    padding: 0 10px 0 6px;
  }

  .viewer-title .title-left { gap: 2px; }

  .viewer-menu {
    height: 12px;
    flex: none;
    display: flex;
    gap: 9px;
    padding-left: 5px;
    line-height: 11px;
  }

  .viewer-tools {
    height: 46px;
    flex: none;
    display: flex;
    background: #f3f6f8;
    padding-left: 2px;
  }

  .tool {
    box-sizing: border-box;
    height: 45px;
    display: flex;
    flex-direction: column;
    align-items: center;
    padding-top: 2px;
    border: 1px solid transparent;
    text-align: center;
    font-size: 7.700px;
  }

  .tool.active {
    background: #d8effa;
    border-color: #6eb3d2;
  }

  .tool > span {
    white-space: pre;
  }

  .tool-icon { position: relative; }

  .drop {
    position: absolute;
    right: -7px;
    bottom: 1px;
    border: 3px solid transparent;
    border-top: 4px solid #444;
    border-bottom: 0;
  }

  .tool-sep { padding-top: 2px; }

  .tool-sep i {
    display: block;
    box-sizing: border-box;
    width: 100%;
    height: 40px;
    border-right: 1px dashed #777;
  }

  .desktop {
    position: relative;
    flex: 1;
    margin: 0 2px 0 1px;
    border-bottom: 1px solid #ddd;
    background: #000;
    overflow: hidden;
  }

  .bit { position: absolute; }
  .round { border-radius: 50%; }

  .txt,
  .shortcut { color: #fff; }

  .shortcut {
    position: absolute;
    left: 840px;
    width: 70px;
    display: flex;
    flex-direction: column;
    align-items: center;
    text-align: center;
  }

  .shortcut span { margin-top: 2px; }

  .mixer {
    position: absolute;
    left: 669px;
    top: 253px;
    width: 236px;
    height: 227px;
    background: #fff;
  }

  .mixer-title {
    display: flex;
    justify-content: space-between;
    align-items: center;
    height: 20px;
    padding: 0 5px 0 0;
    color: #999;
    margin-left: -4px;
  }

  fieldset {
    height: 191px;
    margin: 7px 7px 0 3px;
    padding: 0;
    border: 1px solid #e4e4e4;
    box-sizing: border-box;
  }

  legend {
    margin-left: 4px;
    padding: 0 2px;
  }

  .channel {
    width: 75px;
    height: 171px;
    margin-top: 6px;
    border-right: 1px solid #ddd;
    display: flex;
    flex-direction: column;
    align-items: center;
    padding-top: 1px;
  }

  .channel > span { margin-top: 4px; }
  .slider { margin: 20px 0 0 -7px; }
  .speaker { margin-top: 10px; }

  .activate {
    position: absolute;
    left: 715px;
    top: 434px;
    color: #b9b9b9;
    letter-spacing: 0;
  }

  .activate p {
    margin: 0;
    font-size: 12.800px;
    line-height: 16px;
  }

  .activate small {
    display: block;
    font-size: 9.600px;
    line-height: 14px;
  }

  .console {
    position: absolute;
    left: 14px;
    top: 10px;
    width: 656px;
    height: 470px;
    background: #fff;
    display: flex;
    flex-direction: column;
    box-sizing: border-box;
    border-right: 1px solid #777;
  }

  .console-title {
    height: 19px;
    flex: none;
    display: flex;
    align-items: center;
    justify-content: space-between;
    padding: 0 10px 0 5px;
  }

  .console-menu {
    height: 16px;
    flex: none;
    display: flex;
    gap: 11px;
    padding-left: 6px;
    line-height: 15px;
    border-bottom: 1px solid #ddd;
  }

  .console-tools {
    height: 17px;
    flex: none;
    display: flex;
    align-items: center;
    gap: 4px;
    padding-left: 3px;
    border-bottom: 2px solid #e2e2e2;
  }

  .console-tools i {
    width: 1px;
    height: 12px;
    margin: 0 1px;
    background: #bbb;
  }

  .pressed {
    padding: 2px 1px;
    margin-right: -2px;
    margin-left: -1px;
    background: #cce8f6;
  }

  .delete { margin-left: -1px; }

  .console-body {
    flex: 1;
    min-height: 0;
    display: flex;
    gap: 2px;
    background: #eee;
  }

  .tree,
  .list,
  .actions {
    box-sizing: border-box;
    background: #fff;
    border: 1px solid #aaa;
    overflow: hidden;
  }

  .tree {
    width: 127px;
    border-left: 0;
    display: flex;
    flex-direction: column;
  }

  .node {
    height: 12px;
    flex: none;
    display: flex;
    align-items: center;
    gap: 3px;
    margin-left: 3px;
    letter-spacing: -0.22px;
  }

  .node em {
    width: 6px;
    margin-right: 2px;
    margin-left: -3px;
  }

  .node .selected {
    background: #dcdcdc;
    padding: 0 2px;
    margin: 0 -2px;
  }

  .tree-scroll {
    height: 13px;
    margin-top: auto;
    padding: 0 3px;
    gap: 3px;
  }

  .tree-scroll i {
    width: 97px;
    height: 10px;
    margin-right: 4px;
  }

  .list { width: 399px; }

  .list-head {
    height: 16px;
    display: flex;
    line-height: 16px;
    padding-left: 4px;
  }

  .list-head span {
    box-sizing: border-box;
    width: 62.500px;
    border-right: 1px solid #eee;
  }

  .list-head span + span { width: 100px; padding-left: 4px; }
  .list-head span:last-child { width: 133px; }

  .user {
    height: 12.700px;
    display: flex;
    align-items: center;
    padding-left: 3px;
  }

  .uname {
    width: 155px;
    padding-left: 1px;
    line-height: 12px;
  }

  .udesc { line-height: 12px; width: 129px; }

  .user.selected span {
    height: 12.500px;
    background: #0f78d4;
    color: #fff;
  }

  .actions {
    flex: 1;
    border-color: #666 #ddd #ddd #888;
  }

  .actions b {
    display: block;
    padding-left: 3px;
    height: 14px;
    line-height: 13px;
    background: #f2f2f2;
  }

  .act-head {
    height: 16px;
    display: flex;
    align-items: center;
    justify-content: space-between;
    padding: 0 3px 0 4px;
    background: linear-gradient(#bccfe3, #9cb5d1);
    color: #1f3f6b;
  }

  .act-item {
    height: 20px;
    box-sizing: border-box;
    padding: 0 4px 3px 20px;
    display: flex;
    align-items: center;
    justify-content: space-between;
  }

  .console-status {
    height: 13px;
    flex: none;
    display: flex;
    background: #f0f0f0;
    line-height: 12px;
    padding-left: 1px;
    border-top: 1px solid #ddd;
    overflow: hidden;
  }

  .console-status span { width: 507px; flex: none; }

  .console-status i {
    width: 88px;
    flex: none;
    border-left: 1px solid #ddd;
  }

  .context {
    position: absolute;
    left: 164px;
    top: 137px;
    width: 112px;
    height: 110px;
    box-sizing: border-box;
    padding: 1px 2px;
    background: #f0f0f0;
    border: 1px solid #d0d0d0;
  }

  .context div {
    height: 15px;
    line-height: 13.500px;
    padding-left: 21px;
  }

  .context .tight { height: 14.500px; }
  .context .hot { background: #91c9f7; }

  .context .sub {
    display: flex;
    align-items: center;
    justify-content: space-between;
    padding-right: 3px;
  }

  .context hr {
    height: 1px;
    margin: 1.600px 3px 1.600px 22px;
    border: 0;
    background: #ddd;
  }

  .remote {
    position: absolute;
    left: 0;
    right: 0;
    bottom: 0;
    height: 26px;
  }

  .remote .tray { padding-right: 16px; }
  .remote .time { margin-right: 6px; }

  .viewer-status {
    height: 12px;
    padding-left: 2px;
    font-size: 7.800px;
  }

  .viewer-status span { width: 58.500px; }
  .viewer-status span:nth-child(2) { width: 125px; }
  .viewer-status span:nth-child(3) { width: 168px; }

  .watermark {
    position: absolute;
    left: 538px;
    top: 4px;
    width: 200px;
    text-align: center;
    color: #fff;
    font: bold 15px/20px "DejaVu Sans", sans-serif;
    letter-spacing: 0;
    transform: scaleX(1.19);
    text-shadow: 1px 0 1px #333, -1px 0 1px #333, 0 1px 1px #333, 0 -1px 1px #333, 0 0 3px #555;
  }

  .watermark small { font-size: 13px; }
  .watermark .tld { font-size: 11px; }
</style>
